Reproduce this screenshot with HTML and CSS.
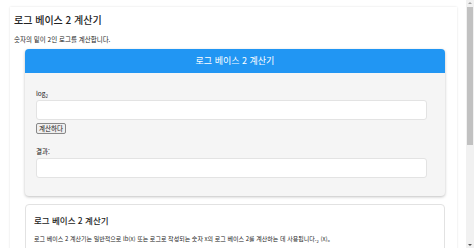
FILE: index.html
```html
<!DOCTYPE html>
<html lang="ko">
<head>
<meta charset="utf-8">
<title>로그 베이스 2 계산기</title>
<link rel="stylesheet" href="styles.css">
</head>
<body>
<div class="page">
  <h1 class="title">로그 베이스 2 계산기</h1>
  <p class="subtitle">숫자의 밑이 2인 로그를 계산합니다.</p>
  <div class="calc">
    <div class="calc-head">로그 베이스 2 계산기</div>
    <div class="calc-body">
      <label class="label">log<sub>2</sub></label>
      <input class="field" type="text">
      <button class="btn">계산하다</button>
      <label class="label result-label">결과:</label>
      <input class="field" type="text">
    </div>
  </div>
  <div class="info">
    <h2 class="info-title">로그 베이스 2 계산기</h2>
    <p class="info-text">로그 베이스 2 계산기는 일반적으로 lb(x) 또는 로그로 작성되는 숫자 x의 로그 베이스 2를 계산하는 데 사용됩니다.<sub>2</sub> (x)。</p>
  </div>
</div>
<div class="scrollbar">
  <div class="sb-up"></div>
  <div class="sb-thumb"></div>
  <div class="sb-track"></div>
  <div class="sb-down"></div>
</div>
</body>
</html>
```
FILE: styles.css
```css
html, body {
  margin: 0;
  padding: 0;
  background: #fff;
  overflow: hidden;
  height: 248px;
}
body {
  font-family: "Noto Sans CJK KR", "Noto Sans", sans-serif;
  color: #222;
}
.page {
  margin: 7px 17px 0 10px;
  padding: 6px 12px 0 4px;
  box-shadow: 0 0 2px rgba(0,0,0,0.12);
  height: 260px;
  box-sizing: border-box;
}
.title {
  font-size: 10px;
  font-weight: 500;
  margin: 0;
  line-height: 14px;
}
.subtitle {
  font-size: 6.5px;
  margin: 7px 0 0;
  line-height: 10px;
}
.calc {
  margin: 5px 0 0 11px;
  border-radius: 4px;
  box-shadow: 0 1px 3px rgba(0,0,0,0.25);
  background: #f5f5f5;
}
.calc-head {
  background: #2196f3;
  color: #fff;
  text-align: center;
  font-size: 9px;
  height: 24px;
  line-height: 23px;
  border-radius: 4px 4px 0 0;
}
.calc-body {
  padding: 16px 18px 18px 11px;
  display: flex;
  flex-direction: column;
  align-items: flex-start;
}
.label {
  font-size: 6.5px;
  line-height: 8px;
}
.label sub {
  font-size: 4.5px;
  line-height: 0;
}
.field {
  margin: 3px 0 0;
  width: 100%;
  height: 20px;
  box-sizing: border-box;
  border: 1px solid #e3e3e3;
  border-radius: 3px;
  background: #fff;
  padding: 0;
}
.btn {
  margin-top: 3px;
  font-family: inherit;
  font-size: 6.5px;
  line-height: 7px;
  padding: 1px 2px;
  border: 1px solid #888;
  border-radius: 2px;
  background: #efefef;
  color: #111;
}
.result-label {
  margin-top: 13px;
}
.info {
  margin: 8px 0 0 11px;
  border: 1px solid #e2e2e2;
  border-radius: 4px;
  padding: 8px 8px 0 8px;
  background: #fff;
  height: 60px;
}
.info-title {
  font-size: 8.5px;
  font-weight: 500;
  margin: 0;
  line-height: 14px;
}
.info-text {
  font-size: 6px;
  margin: 7px 0 0;
  line-height: 10px;
  white-space: nowrap;
}
.info-text sub {
  font-size: 4px;
  line-height: 0;
}
.scrollbar {
  position: fixed;
  top: 0;
  right: 0;
  width: 8px;
  height: 248px;
  background: #f1f1f1;
  display: flex;
  flex-direction: column;
}
.sb-up, .sb-down {
  height: 7px;
  flex: none;
  position: relative;
}
.sb-up::after, .sb-down::after {
  content: "";
  position: absolute;
  left: 2px;
  border-left: 2px solid transparent;
  border-right: 2px solid transparent;
}
.sb-up::after {
  top: 2px;
  border-bottom: 2px solid #a3a3a3;
}
.sb-down::after {
  bottom: 2px;
  border-top: 2px solid #505050;
}
.sb-thumb {
  height: 138px;
  flex: none;
  margin: 0 1px;
  background: #c1c1c1;
}
.sb-track {
  flex: 1;
}
```
